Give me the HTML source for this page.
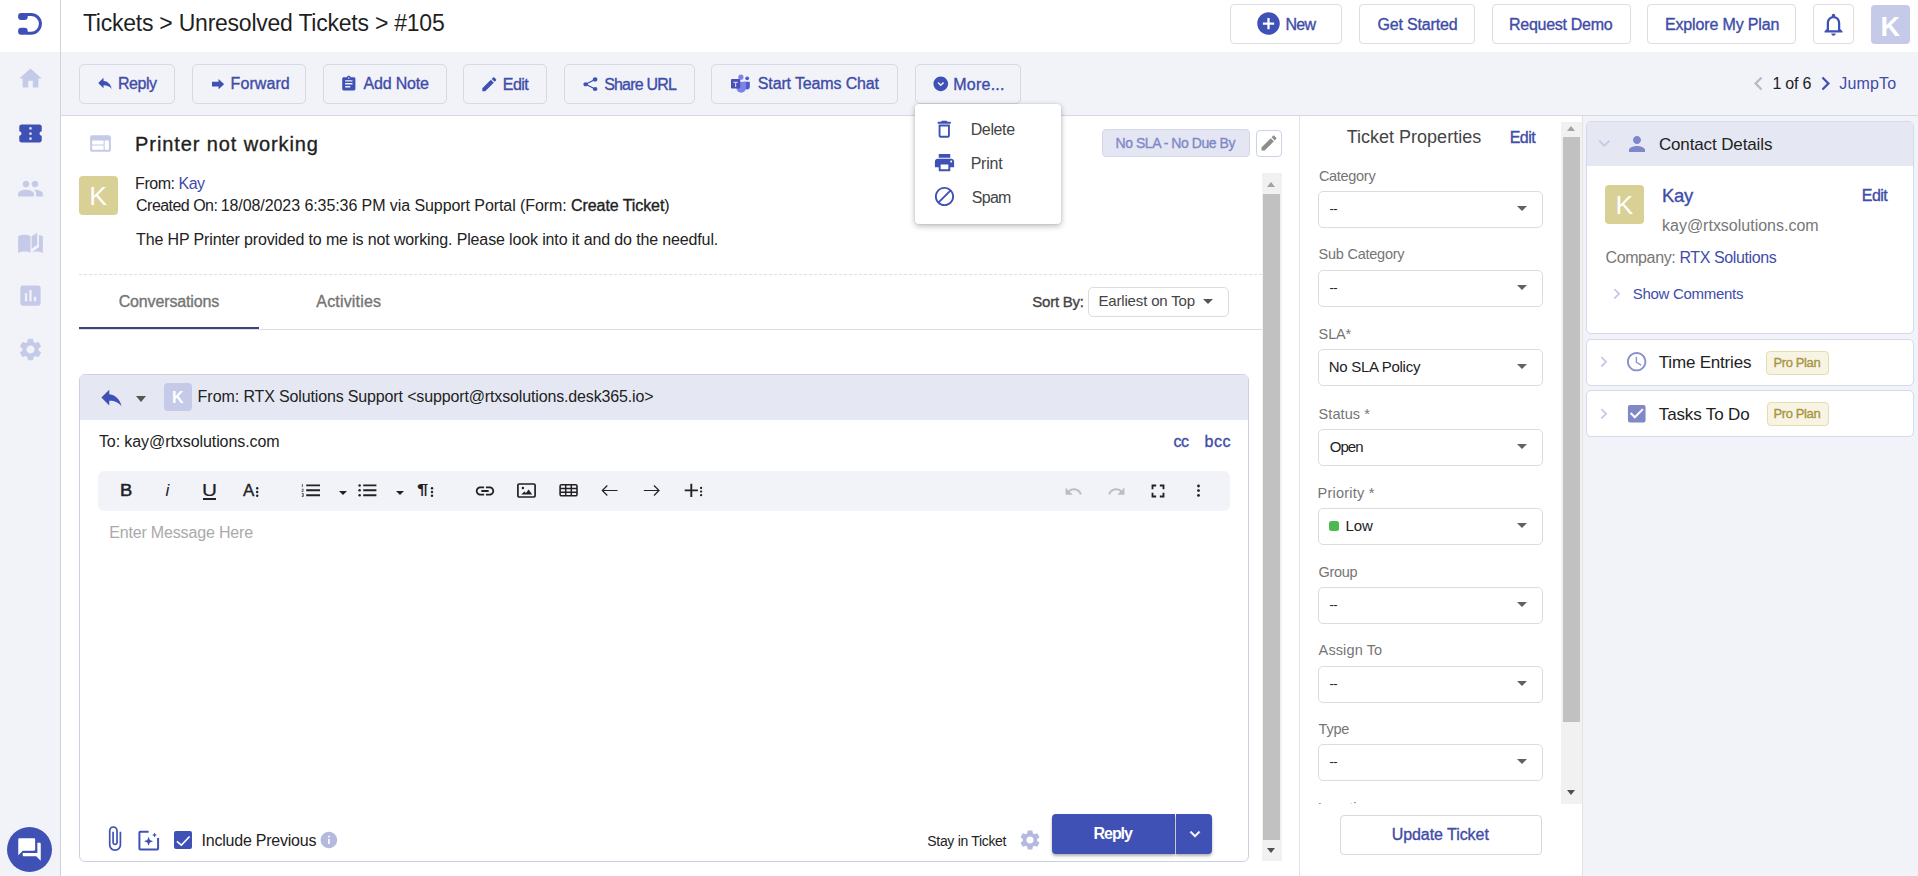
<!DOCTYPE html>
<html lang="en">
<head>
<meta charset="utf-8">
<title>Tickets - Unresolved Tickets - #105</title>
<style>
*{box-sizing:border-box;margin:0;padding:0}
html,body{width:1918px;height:876px;overflow:hidden;background:#fff}
body{font-family:"Liberation Sans",sans-serif;font-size:16px;color:#222;position:relative}
.abs{position:absolute}
.t{position:absolute;white-space:nowrap;line-height:1}
.ind{color:#3f4ca8}
.md{-webkit-text-stroke:0.35px currentColor}
svg{display:block}
/* sidebar */
#side{left:0;top:0;width:61px;height:876px;background:#f2f3f9;border-right:1px solid #d2d3da}
#sidetop{left:0;top:0;width:60px;height:52px;background:#fff}
/* header */
#hdr{left:61px;top:0;width:1857px;height:52px;background:#fff}
.hbtn{position:absolute;top:4.200px;height:40px;border:1px solid #dddde3;border-radius:4px;background:#fff}
/* toolbar */
#tbar{left:61px;top:52px;width:1857px;height:64px;background:#f2f3f9;border-bottom:1px solid #d5d7e3}
.tbtn{position:absolute;top:64px;height:40px;border:1px solid #d6d8e2;border-radius:5px;background:#f2f3f9}
/* props */
.lbl{position:absolute;left:1318px;font-size:15px;color:#757575;white-space:nowrap;line-height:1}
.sel{position:absolute;left:1318px;width:225px;height:37px;border:1px solid #dcdcdc;border-radius:5px;background:#fff}
.sel .v{position:absolute;left:11px;top:10px;font-size:15px;line-height:1;color:#222;white-space:nowrap}
.sel .c{position:absolute;right:15.200px;top:14px;width:0;height:0;border-left:5px solid transparent;border-right:5px solid transparent;border-top:5px solid #616161}
.card{position:absolute;left:1586.400px;width:328px;background:#fff;border:1px solid #d5d8e8;border-radius:5px}
.pro{position:absolute;height:24px;border:1px solid #e6dcae;border-radius:4px;background:#f8f4e3;color:#a89443;font-size:13px;line-height:22px;padding:0 6px;white-space:nowrap}
</style>
<style id="fit">
#title{left:82.90px;top:12px;letter-spacing:-0.238px}
#hnew{left:1285.60px;top:17px;letter-spacing:-0.830px}
#hget{left:1377.50px;top:17px;letter-spacing:-0.173px}
#hreq{left:1509.10px;top:17px;letter-spacing:-0.293px}
#hexp{left:1664.90px;top:17px;letter-spacing:-0.143px}
#hav{left:1880.60px;top:14px;letter-spacing:-0.901px}
#breply{left:118.00px;top:76px;letter-spacing:-0.477px}
#bfwd{left:230.60px;top:76px;letter-spacing:0.068px}
#bnote{left:363.40px;top:76px;letter-spacing:-0.160px}
#bedit{left:502.80px;top:77px;letter-spacing:-0.578px}
#bshare{left:604.20px;top:77px;letter-spacing:-0.820px}
#bteams{left:757.80px;top:76px;letter-spacing:-0.138px}
#bmore{left:953.30px;top:77px;letter-spacing:0.225px}
#pg{left:1772.40px;top:76px;letter-spacing:-0.227px}
#jump{left:1839.30px;top:76px;letter-spacing:0.173px}
#subj{left:135.10px;top:134px;letter-spacing:0.893px}
#sla{left:1115.50px;top:136px;letter-spacing:-0.454px}
#av1{left:89.20px;top:183px;letter-spacing:-0.612px}
#from1{left:135.10px;top:176px;letter-spacing:-0.475px}
#created{left:220.70px;top:198px;letter-spacing:-0.076px}
#body1{left:136.10px;top:232px;letter-spacing:-0.139px}
#tab1{left:118.70px;top:294px;letter-spacing:-0.140px}
#tab2{left:316.30px;top:294px;letter-spacing:0.175px}
#sortl{left:1032.30px;top:294px;letter-spacing:-0.242px}
#sortv{left:1098.40px;top:293px;letter-spacing:-0.158px}
#av2{left:172.10px;top:390px;letter-spacing:-0.908px}
#from2a{left:197.60px;top:389px;letter-spacing:-0.034px}
#from2{left:243.40px;top:389px;letter-spacing:-0.143px}
#to{left:98.90px;top:434px;letter-spacing:-0.078px}
#cc{left:1173.60px;top:434px;letter-spacing:-0.600px}
#bcc{left:1204.50px;top:434px;letter-spacing:0.547px}
#ph{left:109.20px;top:525px;letter-spacing:-0.167px}
#incl{left:201.60px;top:833px;letter-spacing:-0.233px}
#stay{left:927.30px;top:834px;letter-spacing:-0.314px}
#rbtn{left:1093.60px;top:826px;letter-spacing:-1.070px}
#ptitle{left:1346.70px;top:128px;letter-spacing:0.007px}
#pedit{left:1509.70px;top:130px;letter-spacing:-0.511px}
#upd{left:1391.70px;top:827px;letter-spacing:-0.057px}
#cdt{left:1658.90px;top:136px;letter-spacing:-0.127px}
#av3{left:1615.40px;top:192px;letter-spacing:-0.712px}
#cname{left:1662.00px;top:187px;letter-spacing:-0.370px}
#cedit{left:1861.80px;top:188px;letter-spacing:-0.544px}
#cmail{left:1662.00px;top:218px;letter-spacing:-0.006px}
#ccomp{left:1605.50px;top:250px;letter-spacing:-0.389px}
#cshow{left:1632.70px;top:286px;letter-spacing:-0.293px}
#tent{left:1658.80px;top:354px;letter-spacing:-0.198px}
#pro1{left:1773.40px;top:356px;letter-spacing:-0.364px}
#ttd{left:1658.80px;top:406px;letter-spacing:-0.143px}
#pro2{left:1773.40px;top:407px;letter-spacing:-0.364px}
#mdel{left:970.70px;top:122px;letter-spacing:-0.370px}
#mprint{left:970.70px;top:156px;letter-spacing:-0.240px}
#mspam{left:971.70px;top:190px;letter-spacing:-0.690px}
#eb{left:119.72px;top:482px;letter-spacing:0.180px}
#ei{left:165.40px;top:482px;letter-spacing:-0.304px}
#eu{left:202.08px;top:482px;letter-spacing:0.160px}
#ea{left:242.90px;top:482px;letter-spacing:-1.105px}
#l0{left:1318.90px;top:169px;letter-spacing:-0.299px}
#l1{left:1318.60px;top:247px;letter-spacing:-0.247px}
#l2{left:1318.60px;top:327px;letter-spacing:-0.140px}
#l3{left:1318.60px;top:407px;letter-spacing:0.080px}
#l4{left:1317.60px;top:486px;letter-spacing:0.227px}
#l5{left:1318.60px;top:565px;letter-spacing:-0.337px}
#l6{left:1318.60px;top:643px;letter-spacing:0.119px}
#l7{left:1318.60px;top:722px;letter-spacing:-0.224px}
#l8{left:1318.10px;top:801px;letter-spacing:-0.052px}
#v2{left:1328.70px;top:359px;letter-spacing:-0.279px}
#v3{left:1329.70px;top:439px;letter-spacing:-0.920px}
#v4{left:1345.50px;top:518px;letter-spacing:-0.099px}
#v0{left:1329.60px;top:202px;letter-spacing:-0.643px}
#v1{left:1329.60px;top:281px;letter-spacing:-0.643px}
#v5{left:1329.60px;top:598px;letter-spacing:-0.643px}
#v6{left:1329.60px;top:677px;letter-spacing:-0.643px}
#v7{left:1329.60px;top:755px;letter-spacing:-0.643px}
#created0{left:136.10px;top:198px;letter-spacing:-0.541px}
</style>
</head>
<body>
<!-- SIDEBAR -->
<div id="side" class="abs"></div>
<div id="sidetop" class="abs"></div>
<svg class="abs" style="left:0;top:0" width="60" height="52" viewBox="0 0 60 52"><path d="M26 14.4h5a9.4 9.4 0 0 1 0 18.800h-5" fill="none" stroke="#3f4fb5" stroke-width="3"/><rect x="18.100" y="12.900" width="9.600" height="7" rx="3.200" fill="#3f4fb5"/><rect x="18.100" y="27.800" width="9.600" height="6.900" rx="3.200" fill="#3f4fb5"/></svg>
<svg class="abs" style="left:17px;top:65px" width="27" height="27" viewBox="0 0 24 24" fill="#c5cae9"><path d="M10 20v-6h4v6h5v-8h3L12 3 2 12h3v8z"/></svg>
<svg class="abs" style="left:17px;top:120px" width="27" height="27" viewBox="0 0 24 24" fill="#3f51b5"><path d="M22 10V6c0-1.110-.9-2-2-2H4c-1.100 0-1.990.890-1.990 2v4c1.100 0 1.990.9 1.990 2s-.890 2-2 2v4c0 1.100.9 2 2 2h16c1.100 0 2-.9 2-2v-4c-1.100 0-2-.9-2-2s.9-2 2-2zm-9 7.500h-2v-2h2v2zm0-4.500h-2v-2h2v2zm0-4.500h-2v-2h2v2z"/></svg>
<svg class="abs" style="left:17px;top:175px" width="27" height="27" viewBox="0 0 24 24" fill="#c5cae9"><path d="M16 11c1.660 0 2.990-1.340 2.990-3S17.660 5 16 5c-1.660 0-3 1.340-3 3s1.340 3 3 3zm-8 0c1.660 0 2.990-1.340 2.990-3S9.660 5 8 5C6.340 5 5 6.340 5 8s1.340 3 3 3zm0 2c-2.330 0-7 1.170-7 3.500V19h14v-2.500c0-2.330-4.670-3.500-7-3.500zm8 0c-.29 0-.62.020-.97.050 1.160.84 1.970 1.970 1.970 3.450V19h6v-2.500c0-2.330-4.670-3.500-7-3.500z"/></svg>
<svg class="abs" style="left:17px;top:229px" width="27" height="27" viewBox="0 0 24 24" fill="#c5cae9"><path d="M1 6.500c2-.9 4.200-1.300 6-1.300 1.700 0 3.500.4 5 1.300v14.800c-1.500-.9-3.300-1.300-5-1.300-1.800 0-4 .4-6 1.300V6.500zM13 6.500l5-3.500v11l-5 3.500v-11zM19.500 5.300c1.200.2 2.400.6 3.500 1.200v14.800c-2-.9-4.200-1.300-6-1.300-1.300 0-2.700.2-4 .8l6.500-4.600V5.300z"/></svg>
<svg class="abs" style="left:17px;top:282px" width="27" height="27" viewBox="0 0 24 24" fill="#c5cae9"><path d="M19 3H5c-1.100 0-2 .9-2 2v14c0 1.100.9 2 2 2h14c1.100 0 2-.9 2-2V5c0-1.100-.9-2-2-2zM9 17H7v-7h2v7zm4 0h-2V7h2v10zm4 0h-2v-4h2v4z"/></svg>
<svg class="abs" style="left:17px;top:336px" width="27" height="27" viewBox="0 0 24 24" fill="#c5cae9"><path d="M19.140 12.940c.04-.3.060-.61.060-.94 0-.32-.020-.64-.070-.94l2.030-1.580c.18-.14.23-.41.12-.61l-1.920-3.320c-.12-.22-.37-.29-.59-.22l-2.390.96c-.5-.38-1.030-.7-1.620-.94l-.36-2.540c-.04-.24-.24-.41-.48-.41h-3.840c-.24 0-.43.17-.47.41l-.36 2.540c-.59.24-1.130.57-1.620.94l-2.390-.96c-.22-.08-.47 0-.59.22L2.740 8.870c-.12.21-.08.47.12.61l2.030 1.580c-.05.3-.09.63-.09.94s.02.64.07.94l-2.030 1.580c-.18.14-.23.41-.12.61l1.920 3.320c.12.22.37.29.59.22l2.390-.96c.5.38 1.030.7 1.620.94l.36 2.540c.05.24.24.41.48.41h3.840c.24 0 .44-.17.47-.41l.36-2.540c.59-.24 1.130-.56 1.620-.94l2.390.96c.22.08.47 0 .59-.22l1.920-3.320c.12-.22.07-.47-.12-.61l-2.010-1.580zM12 15.600c-1.980 0-3.600-1.620-3.600-3.600s1.620-3.600 3.600-3.600 3.600 1.620 3.600 3.600-1.620 3.600-3.600 3.600z"/></svg>
<div class="abs" style="left:7px;top:827px;width:45px;height:45px;border-radius:50%;background:#3f51b5"></div>
<svg class="abs" style="left:16px;top:836px" width="27" height="27" viewBox="0 0 24 24" fill="#fff"><path d="M21 6h-2v9H6v2c0 .55.45 1 1 1h11l4 4V7c0-.55-.45-1-1-1zm-4 6V3c0-.55-.45-1-1-1H3c-.55 0-1 .45-1 1v14l4-4h10c.55 0 1-.45 1-1z"/></svg>

<!-- HEADER -->
<div id="hdr" class="abs"></div>
<div class="t" id="title" style="font-size:23px;color:#1f1f1f">Tickets &gt; Unresolved Tickets &gt; #105</div>

<div class="hbtn" style="left:1230px;width:112px"></div>
<svg class="abs" style="left:1255px;top:10px" width="27" height="27" viewBox="0 0 24 24" fill="#3f51b5"><path d="M12 2C6.480 2 2 6.480 2 12s4.480 10 10 10 10-4.480 10-10S17.520 2 12 2zm5 11h-4v4h-2v-4H7v-2h4V7h2v4h4v2z"/></svg>
<div class="t ind md" id="hnew" style="font-size:16px">New</div>
<div class="hbtn" style="left:1359px;width:116px"></div>
<div class="t ind md" id="hget" style="font-size:16px">Get Started</div>
<div class="hbtn" style="left:1492px;width:139px"></div>
<div class="t ind md" id="hreq" style="font-size:16px">Request Demo</div>
<div class="hbtn" style="left:1647px;width:149px"></div>
<div class="t ind md" id="hexp" style="font-size:16px">Explore My Plan</div>
<div class="hbtn" style="left:1813px;width:41px"></div>
<svg class="abs" style="left:1820px;top:11px" width="27" height="27" viewBox="0 0 24 24" fill="#3f51b5"><path d="M12 22c1.100 0 2-.9 2-2h-4c0 1.100.9 2 2 2zm6-6v-5c0-3.070-1.630-5.640-4.500-6.320V4c0-.83-.67-1.500-1.500-1.500s-1.500.67-1.500 1.500v.68C7.640 5.360 6 7.920 6 11v5l-2 2v1h16v-1l-2-2zm-2 1H8v-6c0-2.480 1.510-4.500 4-4.500s4 2.020 4 4.500v6z"/></svg>
<div class="abs" style="left:1871px;top:5px;width:39px;height:39px;border-radius:4px;background:#c5cae9"></div>
<div class="t" id="hav" style="font-size:27px;font-weight:bold;color:#fff">K</div>

<!-- TOOLBAR -->
<div id="tbar" class="abs"></div>
<div class="tbtn" style="left:79px;width:96px"></div>
<svg class="abs" style="left:95.750px;top:74.200px" width="18" height="18" viewBox="0 0 24 24" fill="#3f51b5"><path d="M10 9V5l-7 7 7 7v-4.100c5 0 8.500 1.600 11 5.100-1-5-4-10-11-11z"/></svg>
<div class="t ind md" id="breply" style="font-size:16px">Reply</div>
<div class="tbtn" style="left:192px;width:114px"></div>
<svg class="abs" style="left:211.500px;top:78.500px" width="12.200" height="10.400" viewBox="0 0 12 10" preserveAspectRatio="none" fill="#3f51b5"><path d="M6.400 0L12 5 6.400 10V7.300H0V2.700h6.400z"/></svg>
<div class="t ind md" id="bfwd" style="font-size:16px">Forward</div>
<div class="tbtn" style="left:323px;width:124px"></div>
<svg class="abs" style="left:340px;top:74.600px" width="17.600" height="17.600" viewBox="0 0 24 24" fill="#3f51b5"><path d="M19 3h-4.180C14.400 1.840 13.300 1 12 1c-1.300 0-2.400.84-2.820 2H5c-1.100 0-2 .9-2 2v14c0 1.100.9 2 2 2h14c1.100 0 2-.9 2-2V5c0-1.100-.9-2-2-2zm-7 0c.55 0 1 .45 1 1s-.45 1-1 1-1-.45-1-1 .45-1 1-1zm2 14H7v-2h7v2zm3-4H7v-2h10v2zm0-4H7V7h10v2z"/></svg>
<div class="t ind md" id="bnote" style="font-size:16px">Add Note</div>
<div class="tbtn" style="left:463px;width:84px"></div>
<svg class="abs" style="left:479.900px;top:74.700px" width="18.600" height="18.600" viewBox="0 0 24 24" fill="#3f51b5"><path d="M3 17.250V21h3.750L17.810 9.940l-3.750-3.750L3 17.250zM20.710 7.040c.39-.39.39-1.020 0-1.410l-2.340-2.340c-.39-.39-1.020-.39-1.410 0l-1.830 1.830 3.750 3.750 1.830-1.830z"/></svg>
<div class="t ind md" id="bedit" style="font-size:16px">Edit</div>
<div class="tbtn" style="left:564px;width:130.700px"></div>
<svg class="abs" style="left:580.850px;top:75.600px" width="18.800" height="16.400" viewBox="0 0 24 24" preserveAspectRatio="none" fill="#3f51b5"><path d="M18 16.080c-.76 0-1.440.3-1.960.77L8.910 12.700c.05-.23.09-.46.09-.7s-.04-.47-.09-.7l7.050-4.110c.54.5 1.250.81 2.040.81 1.660 0 3-1.340 3-3s-1.340-3-3-3-3 1.340-3 3c0 .24.04.47.09.7L8.040 9.810C7.500 9.310 6.790 9 6 9c-1.660 0-3 1.340-3 3s1.340 3 3 3c.79 0 1.500-.31 2.040-.81l7.120 4.160c-.05.21-.08.43-.08.65 0 1.610 1.310 2.920 2.920 2.920 1.610 0 2.920-1.310 2.920-2.920s-1.310-2.920-2.920-2.920z"/></svg>
<div class="t ind md" id="bshare" style="font-size:16px">Share URL</div>
<div class="tbtn" style="left:711px;width:187px"></div>
<svg class="abs" id="teams" style="left:730px;top:74px" width="21" height="20" viewBox="0 0 21 20"><circle cx="17.200" cy="4.300" r="1.900" fill="#5059c9"/><path d="M14 7.700h5.800v4.800a2.800 2.800 0 0 1-5.800 0z" fill="#5059c9"/><circle cx="10.900" cy="3.200" r="2.600" fill="#7b83eb"/><path d="M6.400 7.700H16v6.200a4.800 4.800 0 0 1-9.600 0z" fill="#7b83eb"/><rect x="1" y="5.100" width="9.200" height="9.400" rx=".8" fill="#4a4fb8"/><path d="M3.400 7.800h4.400v1.100H6.200v4H5V8.900H3.400z" fill="#c5c9f6"/></svg>
<div class="t ind md" id="bteams" style="font-size:16px">Start Teams Chat</div>
<div class="tbtn" style="left:915px;width:105.500px"></div>
<svg class="abs" style="left:931.500px;top:75.300px" width="17.600" height="17.600" viewBox="0 0 24 24" fill="#3f51b5"><path d="M12 2C6.480 2 2 6.480 2 12s4.480 10 10 10 10-4.480 10-10S17.520 2 12 2zm0 13.500L7.500 11l1.420-1.410L12 12.670l3.080-3.080L16.500 11 12 15.500z"/></svg>
<div class="t ind md" id="bmore" style="font-size:16px">More...</div>

<svg class="abs" style="left:1745.200px;top:70.050px" width="27" height="27" viewBox="0 0 24 24" fill="#b8b9c4"><path d="M15.410 7.410L14 6l-6 6 6 6 1.410-1.410L10.830 12z"/></svg>
<div class="t" id="pg" style="font-size:16px;color:#222">1 of 6</div>
<svg class="abs" style="left:1811.800px;top:70.050px" width="27" height="27" viewBox="0 0 24 24" fill="#3f51b5"><path d="M10 6L8.590 7.410 13.170 12l-4.580 4.590L10 18l6-6z"/></svg>
<div class="t ind" id="jump" style="font-size:16px">JumpTo</div>

<!-- MAIN -->
<div class="abs" id="main" style="left:61px;top:116px;width:1238px;height:760px;background:#fff"></div>
<svg class="abs" style="left:88px;top:131px" width="25" height="25" viewBox="0 0 24 24" fill="#c5cae9"><path d="M20 4H4c-1.100 0-1.990.9-1.990 2L2 18c0 1.100.9 2 2 2h16c1.100 0 2-.9 2-2V6c0-1.100-.9-2-2-2zm-5 14H4v-4h11v4zm0-5H4V9h11v4zm5 5h-4V9h4v9z"/></svg>
<div class="t md" id="subj" style="font-size:20px;color:#1f1f1f">Printer not working</div>
<div class="abs" style="left:1102px;top:129px;width:148px;height:28px;border:1px solid #d3d7ea;border-radius:4px;background:#e4e7f3"></div>
<div class="t md" id="sla" style="font-size:14px;color:#7f89c6">No SLA - No Due By</div>
<div class="abs" style="left:1256.300px;top:130.200px;width:25.600px;height:26.600px;border:1px solid #cfd2e4;border-radius:4px;background:#fff"></div>
<svg class="abs" style="left:1258.800px;top:133.200px" width="20" height="20" viewBox="0 0 24 24" fill="#8d8d8d"><path d="M3 17.250V21h3.750L17.810 9.940l-3.750-3.750L3 17.250zM20.710 7.040c.39-.39.39-1.020 0-1.410l-2.340-2.340c-.39-.39-1.020-.39-1.410 0l-1.830 1.830 3.750 3.750 1.830-1.830z"/></svg>

<div class="abs" style="left:79px;top:176px;width:39px;height:39px;border-radius:4px;background:#d9d095"></div>
<div class="t" id="av1" style="font-size:26.500px;color:#fff">K</div>
<div class="t" id="from1" style="font-size:16px;color:#222">From: <span class="ind">Kay</span></div>
<div class="t" id="created0" style="font-size:16px;color:#222">Created On:</div>
<div class="t" id="created" style="font-size:16px;color:#222">18/08/2023 6:35:36 PM via Support Portal (Form: <span class="md">Create Ticket</span>)</div>
<div class="t" id="body1" style="font-size:16px;color:#222">The HP Printer provided to me is not working. Please look into it and do the needful.</div>
<div class="abs" style="left:79px;top:274px;width:1183px;height:0;border-top:1px dashed #e0e0e0"></div>

<div class="t md" id="tab1" style="font-size:16px;color:#757575">Conversations</div>
<div class="t md" id="tab2" style="font-size:16px;color:#757575">Activities</div>
<div class="abs" style="left:79px;top:329px;width:1183px;height:1px;background:#dedede"></div>
<div class="abs" style="left:79px;top:326.500px;width:180px;height:2.700px;background:#3c447f"></div>
<div class="t md" id="sortl" style="font-size:15px;color:#444">Sort By:</div>
<div class="abs" style="left:1088px;top:287px;width:141px;height:30px;border:1px solid #dcdcdc;border-radius:5px;background:#fff"></div>
<div class="t" id="sortv" style="font-size:15px;color:#444">Earliest on Top</div>
<div class="abs" style="left:1203px;top:299px;width:0;height:0;border-left:5px solid transparent;border-right:5px solid transparent;border-top:5px solid #555"></div>

<!-- main scrollbar -->
<div class="abs" style="left:1261.500px;top:173px;width:20.500px;height:688.400px;background:#f1f1f1"></div>
<div class="abs" style="left:1263.200px;top:194.200px;width:16.800px;height:645.500px;background:#c1c1c1"></div>
<div class="abs" style="left:1266.800px;top:182px;width:0;height:0;border-left:4.600px solid transparent;border-right:4.600px solid transparent;border-bottom:5px solid #a3a3a3"></div>
<div class="abs" style="left:1266.800px;top:848px;width:0;height:0;border-left:4.600px solid transparent;border-right:4.600px solid transparent;border-top:5px solid #505050"></div>

<!-- reply box -->
<div class="abs" style="left:79px;top:374px;width:1170px;height:488px;border:1px solid #cdd0e0;border-radius:6px;background:#fff;overflow:hidden"><div style="height:45px;background:#e5e8f3"></div></div>
<svg class="abs" style="left:98px;top:384px" width="27" height="27" viewBox="0 0 24 24" fill="#3f51b5"><path d="M10 9V5l-7 7 7 7v-4.100c5 0 8.500 1.600 11 5.100-1-5-4-10-11-11z"/></svg>
<div class="abs" style="left:136.100px;top:395.800px;width:0;height:0;border-left:5.800px solid transparent;border-right:5.800px solid transparent;border-top:6px solid #555"></div>
<div class="abs" style="left:164.300px;top:382.700px;width:27.700px;height:28.800px;border-radius:4px;background:#c5cae9"></div>
<div class="t" id="av2" style="font-size:16px;font-weight:bold;color:#fff">K</div>
<div class="t" id="from2a" style="font-size:16px;color:#222">From:</div>
<div class="t" id="from2" style="font-size:16px;color:#222">RTX Solutions Support &lt;support@rtxsolutions.desk365.io&gt;</div>
<div class="t" id="to" style="font-size:16px;color:#222">To: kay@rtxsolutions.com</div>
<div class="t ind md" id="cc" style="font-size:16px">cc</div>
<div class="t ind md" id="bcc" style="font-size:16px">bcc</div>
<div class="abs" id="edbar" style="left:98px;top:471px;width:1132px;height:40px;border-radius:6px;background:#f2f3f9"></div>
<!-- editor icons -->
<div class="t" id="eb" style="font-size:17px;color:#222;-webkit-text-stroke:.5px #222;transform:scaleX(1.08);transform-origin:0 0">B</div>
<div class="t" id="ei" style="font-size:17px;font-style:italic;color:#222">i</div>
<div class="t" id="eu" style="font-size:17px;color:#222;transform:scaleX(1.22);transform-origin:0 0;-webkit-text-stroke:.2px #222">U</div>
<div class="abs" style="left:203px;top:498px;width:13px;height:1.500px;background:#222"></div>
<div class="t md" id="ea" style="font-size:17px;color:#222">A</div>
<svg class="abs" style="left:255px;top:484px" width="5" height="14" viewBox="0 0 5 14" fill="#222"><circle cx="2.200" cy="4.200" r="1.200"/><circle cx="2.200" cy="8" r="1.200"/><circle cx="2.200" cy="11.800" r="1.200"/></svg>
<svg class="abs" style="left:301px;top:483px" width="20" height="15" viewBox="0 0 20 15"><path d="M5.200 2.400H19M5.200 7.300H19M5.200 12.200H19" stroke="#222" stroke-width="1.900" fill="none"/><path d="M1.400 1v3M.8 6.200h1.400v1L.8 8.600h1.600M.8 10.600h1.500v1.500H1.200M2.300 12.100v1.400H.8" stroke="#222" stroke-width=".7" fill="none"/></svg>
<div class="abs" style="left:339px;top:490.500px;width:0;height:0;border-left:4px solid transparent;border-right:4px solid transparent;border-top:4px solid #222"></div>
<svg class="abs" style="left:358px;top:483px" width="20" height="15" viewBox="0 0 20 15"><path d="M5.200 2.400H18.400M5.200 7.300H18.400M5.200 12.200H18.400" stroke="#222" stroke-width="1.900" fill="none"/><circle cx="1.600" cy="2.400" r="1.250" fill="#222"/><circle cx="1.600" cy="7.300" r="1.250" fill="#222"/><circle cx="1.600" cy="12.200" r="1.250" fill="#222"/></svg>
<div class="abs" style="left:396px;top:490.500px;width:0;height:0;border-left:4px solid transparent;border-right:4px solid transparent;border-top:4px solid #222"></div>
<div class="t" id="ep" style="left:417px;top:482px;font-size:14.500px;font-weight:bold;color:#222;transform:scaleX(1.400);transform-origin:0 0">&para;</div>
<svg class="abs" style="left:430px;top:484px" width="5" height="14" viewBox="0 0 5 14" fill="#222"><circle cx="2" cy="4.200" r="1.200"/><circle cx="2" cy="8" r="1.200"/><circle cx="2" cy="11.800" r="1.200"/></svg>
<svg class="abs" style="left:473.500px;top:479.500px" width="22" height="22" viewBox="0 0 24 24" fill="#222"><path d="M3.900 12c0-1.710 1.390-3.100 3.100-3.100h4V7H7c-2.760 0-5 2.240-5 5s2.240 5 5 5h4v-1.900H7c-1.710 0-3.100-1.390-3.100-3.100zM8 13h8v-2H8v2zm9-6h-4v1.900h4c1.710 0 3.100 1.390 3.100 3.100s-1.390 3.100-3.100 3.100h-4V17h4c2.760 0 5-2.240 5-5s-2.240-5-5-5z"/></svg>
<svg class="abs" style="left:516px;top:482px" width="21" height="17" viewBox="0 0 21 17"><rect x="1.900" y="2" width="17.200" height="13" rx="1.200" fill="none" stroke="#222" stroke-width="1.700"/><path d="M5.300 12.400l3.100-2.900 1.600 1.400 2.600-3.400 3.600 4.900z" fill="#222"/><circle cx="6.900" cy="6" r="1.200" fill="#222"/></svg>
<svg class="abs" style="left:558px;top:483px" width="21" height="15" viewBox="0 0 21 15"><rect x="2.100" y="1.800" width="16.900" height="11" rx="1.400" fill="none" stroke="#222" stroke-width="1.600"/><path d="M2 5.500h17M2 9.200h17M7.700 2v11M13.300 2v11" stroke="#222" stroke-width="1.500" fill="none"/></svg>
<svg class="abs" style="left:600px;top:483px" width="19" height="15" viewBox="0 0 19 15"><path d="M17.500 7.500H2.600M7.300 2.500L2.300 7.500l5 5" stroke="#222" stroke-width="1.200" fill="none"/></svg>
<svg class="abs" style="left:642px;top:483px" width="19" height="15" viewBox="0 0 19 15"><path d="M1.800 7.500h14.900M12 2.500l5 5-5 5" stroke="#222" stroke-width="1.200" fill="none"/></svg>
<svg class="abs" style="left:684px;top:483px" width="20" height="15" viewBox="0 0 20 15"><path d="M.7 7.400h13.200M7.300 .8v13.200" stroke="#222" stroke-width="1.900" fill="none"/><circle cx="17.100" cy="5" r="1.150" fill="#222"/><circle cx="17.100" cy="8.600" r="1.150" fill="#222"/><circle cx="17.100" cy="12.200" r="1.150" fill="#222"/></svg>
<svg class="abs" style="left:1064px;top:481.600px" width="19" height="19" viewBox="0 0 24 24" fill="#bdbdbd"><path d="M12.500 8c-2.650 0-5.050.99-6.900 2.600L2 7v9h9l-3.620-3.620c1.390-1.160 3.160-1.880 5.120-1.880 3.540 0 6.550 2.310 7.600 5.500l2.370-.78C21.080 11.030 17.150 8 12.500 8z"/></svg>
<svg class="abs" style="left:1106.500px;top:481.600px" width="19" height="19" viewBox="0 0 24 24" fill="#bdbdbd"><path d="M18.400 10.600C16.550 8.990 14.150 8 11.500 8c-4.650 0-8.580 3.030-9.960 7.220L3.900 16c1.050-3.190 4.050-5.500 7.600-5.500 1.950 0 3.730.72 5.120 1.880L13 16h9V7l-3.600 3.600z"/></svg>
<svg class="abs" style="left:1146.500px;top:479.500px" width="22" height="22" viewBox="0 0 24 24" fill="#222"><path d="M7 14H5v5h5v-2H7v-3zm-2-4h2V7h3V5H5v5zm12 7h-3v2h5v-5h-2v3zM14 5v2h3v3h2V5h-5z"/></svg>
<svg class="abs" style="left:1196px;top:483px" width="5" height="15" viewBox="0 0 5 15" fill="#222"><circle cx="2.500" cy="3" r="1.400"/><circle cx="2.500" cy="7.600" r="1.400"/><circle cx="2.500" cy="12.400" r="1.400"/></svg>
<div class="t" id="ph" style="font-size:16px;color:#aaa">Enter Message Here</div>

<!-- bottom row -->
<svg class="abs" style="left:101.300px;top:824.800px" width="27" height="27" viewBox="0 0 24 24" fill="#3f51b5"><path d="M16.500 6v11.500c0 2.210-1.790 4-4 4s-4-1.790-4-4V5c0-1.380 1.120-2.500 2.500-2.500s2.500 1.120 2.500 2.500v10.500c0 .55-.45 1-1 1s-1-.45-1-1V6H10v9.500c0 1.380 1.120 2.500 2.500 2.500s2.500-1.120 2.500-2.500V5c0-2.210-1.790-4-4-4S7 2.790 7 5v12.500c0 3.040 2.460 5.500 5.500 5.500s5.500-2.460 5.500-5.500V6h-1.500z"/></svg>
<svg class="abs" id="spark" style="left:138px;top:829px" width="22" height="23" viewBox="0 0 22 23"><path d="M10.600 2.700H2.400a1 1 0 0 0-1 1v15.900a1 1 0 0 0 1 1h16.700a1 1 0 0 0 1-1V9.100" fill="none" stroke="#3f51b5" stroke-width="2"/><path d="M10.600 7.700l1.300 3.200 3.200 1.300-3.200 1.300-1.300 3.200-1.300-3.200-3.200-1.300 3.200-1.300z" fill="#3f51b5"/><path d="M16.550 3.500l.75 1.700 1.700.75-1.700.75-.75 1.700-.75-1.700-1.700-.75 1.700-.75z" fill="#3f51b5"/></svg>
<div class="abs" style="left:174px;top:831px;width:18px;height:18px;border-radius:2px;background:#3f51b5"></div>
<svg class="abs" style="left:174px;top:831px" width="18" height="18" viewBox="0 0 18 18"><path d="M2.900 10.400l4.500 3.700L15.600 5.500" fill="none" stroke="#fff" stroke-width="1.600"/></svg>
<div class="t" id="incl" style="font-size:16px;color:#222">Include Previous</div>
<svg class="abs" style="left:319.300px;top:830.100px" width="19.800" height="19.800" viewBox="0 0 24 24" fill="#b4b9dd"><path d="M12 2C6.480 2 2 6.480 2 12s4.480 10 10 10 10-4.480 10-10S17.520 2 12 2zm1 15h-2v-6h2v6zm0-8h-2V7h2v2z"/></svg>
<div class="t" id="stay" style="font-size:14px;color:#222">Stay in Ticket</div>
<svg class="abs" style="left:1017.500px;top:828.400px" width="24" height="24" viewBox="0 0 24 24" fill="#b4b9dd"><path d="M19.140 12.940c.04-.3.060-.61.060-.94 0-.32-.020-.64-.070-.94l2.030-1.580c.18-.14.23-.41.12-.61l-1.920-3.320c-.12-.22-.37-.29-.59-.22l-2.390.96c-.5-.38-1.030-.7-1.620-.94l-.36-2.540c-.04-.24-.24-.41-.48-.41h-3.840c-.24 0-.43.17-.47.41l-.36 2.540c-.59.24-1.130.57-1.620.94l-2.390-.96c-.22-.08-.47 0-.59.22L2.740 8.870c-.12.21-.08.47.12.61l2.030 1.580c-.05.3-.09.63-.09.94s.02.64.07.94l-2.030 1.580c-.18.14-.23.41-.12.61l1.920 3.320c.12.22.37.29.59.22l2.390-.96c.5.38 1.030.7 1.620.94l.36 2.540c.05.24.24.41.48.41h3.840c.24 0 .44-.17.47-.41l.36-2.540c.59-.24 1.130-.56 1.620-.94l2.390.96c.22.08.47 0 .59-.22l1.920-3.320c.12-.22.07-.47-.12-.61l-2.010-1.580zM12 15.600c-1.980 0-3.600-1.620-3.600-3.600s1.620-3.600 3.600-3.600 3.600 1.620 3.600 3.600-1.620 3.600-3.600 3.600z"/></svg>
<div class="abs" style="left:1052px;top:814px;width:123px;height:40px;border-radius:4px 0 0 4px;background:#3f51b5;box-shadow:0 2px 3px rgba(0,0,0,.3)"></div>
<div class="abs" style="left:1176px;top:814px;width:36px;height:40px;border-radius:0 4px 4px 0;background:#3f51b5;box-shadow:0 2px 3px rgba(0,0,0,.3)"></div>
<div class="t" id="rbtn" style="font-size:16px;font-weight:bold;color:#fff">Reply</div>
<svg class="abs" style="left:1184.500px;top:824.300px" width="20" height="20" viewBox="0 0 24 24" fill="#fff" stroke="#fff" stroke-width=".6"><path d="M16.590 8.590L12 13.170 7.410 8.590 6 10l6 6 6-6z"/></svg>

<!-- PROPS -->
<div class="abs" id="props" style="left:1299px;top:116px;width:284px;height:760px;background:#fff;border-left:1px solid #e2e2e8;border-right:1px solid #e2e2e8"></div>
<div class="t" id="ptitle" style="font-size:18px;color:#444">Ticket Properties</div>
<div class="t ind md" id="pedit" style="font-size:16px">Edit</div>
<div class="t" id="l0" style="font-size:14.500px;color:#757575">Category</div>
<div class="sel" style="top:191px"><div class="c"></div></div>
<div class="t" id="v0" style="font-size:13px;color:#222">--</div>
<div class="t" id="l1" style="font-size:14.500px;color:#757575">Sub Category</div>
<div class="sel" style="top:270px"><div class="c"></div></div>
<div class="t" id="v1" style="font-size:13px;color:#222">--</div>
<div class="t" id="l2" style="font-size:14.500px;color:#757575">SLA*</div>
<div class="sel" style="top:349px"><div class="c"></div></div>
<div class="t" id="v2" style="font-size:15px;color:#222">No SLA Policy</div>
<div class="t" id="l3" style="font-size:14.500px;color:#757575">Status *</div>
<div class="sel" style="top:429px"><div class="c"></div></div>
<div class="t" id="v3" style="font-size:15px;color:#222">Open</div>
<div class="t" id="l4" style="font-size:14.500px;color:#757575">Priority *</div>
<div class="sel" style="top:508px"><div class="c"></div></div>
<div class="abs" style="left:1329px;top:521px;width:10px;height:10px;border-radius:2.500px;background:#4cba4f"></div>
<div class="t" id="v4" style="font-size:15px;color:#222">Low</div>
<div class="t" id="l5" style="font-size:14.500px;color:#757575">Group</div>
<div class="sel" style="top:587px"><div class="c"></div></div>
<div class="t" id="v5" style="font-size:13px;color:#222">--</div>
<div class="t" id="l6" style="font-size:14.500px;color:#757575">Assign To</div>
<div class="sel" style="top:666px"><div class="c"></div></div>
<div class="t" id="v6" style="font-size:13px;color:#222">--</div>
<div class="t" id="l7" style="font-size:14.500px;color:#757575">Type</div>
<div class="sel" style="top:744px"><div class="c"></div></div>
<div class="t" id="v7" style="font-size:13px;color:#222">--</div>
<div class="t" id="l8" style="font-size:14.500px;color:#757575">Location</div>
<!-- props scrollbar -->
<div class="abs" style="left:1300px;top:804px;width:282px;height:72px;background:#fff"></div>
<div class="abs" style="left:1561.100px;top:121.500px;width:21px;height:682.300px;background:#f1f1f1"></div>
<div class="abs" style="left:1563.100px;top:137.400px;width:16.800px;height:584.400px;background:#c1c1c1"></div>
<div class="abs" style="left:1567px;top:125.500px;width:0;height:0;border-left:4.600px solid transparent;border-right:4.600px solid transparent;border-bottom:5px solid #a3a3a3"></div>
<div class="abs" style="left:1567px;top:790px;width:0;height:0;border-left:4.600px solid transparent;border-right:4.600px solid transparent;border-top:5px solid #505050"></div>
<div class="abs" style="left:1340px;top:815px;width:202px;height:39.500px;border:1px solid #d8d8de;border-radius:4px;background:#fff"></div>
<div class="t ind md" id="upd" style="font-size:16px">Update Ticket</div>

<!-- RIGHT -->
<div class="abs" id="right" style="left:1583px;top:116px;width:335px;height:760px;background:#f2f3f9"></div>
<div class="card" style="top:121px;height:213px;overflow:hidden"><div style="height:44px;background:#e5e8f3"></div></div>
<svg class="abs" style="left:1593.050px;top:131.900px" width="22.600" height="22.600" viewBox="0 0 24 24" fill="#c5cae9"><path d="M16.590 8.590L12 13.170 7.410 8.590 6 10l6 6 6-6z"/></svg>
<svg class="abs" style="left:1625px;top:132px" width="24" height="24" viewBox="0 0 24 24" fill="#7d88cc"><path d="M12 12c2.210 0 4-1.790 4-4s-1.790-4-4-4-4 1.790-4 4 1.790 4 4 4zm0 2c-2.670 0-8 1.340-8 4v2h16v-2c0-2.660-5.330-4-8-4z"/></svg>
<div class="t" id="cdt" style="font-size:17px;color:#222">Contact Details</div>
<div class="abs" style="left:1605px;top:185px;width:39px;height:39px;border-radius:4px;background:#d9d095"></div>
<div class="t" id="av3" style="font-size:26.500px;color:#fff">K</div>
<div class="t ind md" id="cname" style="font-size:18.500px">Kay</div>
<div class="t ind md" id="cedit" style="font-size:16px">Edit</div>
<div class="t" id="cmail" style="font-size:16px;color:#777">kay@rtxsolutions.com</div>
<div class="t" id="ccomp" style="font-size:16px;color:#777">Company: <span class="ind">RTX Solutions</span></div>
<svg class="abs" style="left:1606.200px;top:283.100px" width="21.500" height="21.500" viewBox="0 0 24 24" fill="#c5cae9"><path d="M10 6L8.590 7.410 13.170 12l-4.580 4.590L10 18l6-6z"/></svg>
<div class="t ind" id="cshow" style="font-size:15px">Show Comments</div>

<div class="card" style="top:339px;height:47px"></div>
<svg class="abs" style="left:1593.400px;top:351.100px" width="21.500" height="21.500" viewBox="0 0 24 24" fill="#c5cae9"><path d="M10 6L8.590 7.410 13.170 12l-4.580 4.590L10 18l6-6z"/></svg>
<svg class="abs" style="left:1625.200px;top:349.900px" width="23.300" height="23.300" viewBox="0 0 24 24" fill="#8a93cc"><path d="M11.990 2C6.470 2 2 6.480 2 12s4.470 10 9.990 10C17.520 22 22 17.520 22 12S17.520 2 11.990 2zM12 20c-4.420 0-8-3.580-8-8s3.580-8 8-8 8 3.580 8 8-3.580 8-8 8zm.5-13H11v6l5.250 3.150.75-1.230-4.500-2.670z"/></svg>
<div class="t" id="tent" style="font-size:17px;color:#222">Time Entries</div>
<div class="pro" style="left:1766px;top:351px;width:63px"></div>
<div class="t md" id="pro1" style="font-size:13px;color:#a89443">Pro Plan</div>

<div class="card" style="top:390px;height:47px"></div>
<svg class="abs" style="left:1593.400px;top:402.800px" width="21.500" height="21.500" viewBox="0 0 24 24" fill="#c5cae9"><path d="M10 6L8.590 7.410 13.170 12l-4.580 4.590L10 18l6-6z"/></svg>
<svg class="abs" style="left:1625.200px;top:401.700px" width="23.500" height="23.500" viewBox="0 0 24 24" fill="#8088c8"><path d="M19 3H5c-1.110 0-2 .9-2 2v14c0 1.100.89 2 2 2h14c1.110 0 2-.9 2-2V5c0-1.100-.89-2-2-2zm-9 14l-5-5 1.410-1.410L10 14.170l7.590-7.590L19 8l-9 9z"/></svg>
<div class="t" id="ttd" style="font-size:17px;color:#222">Tasks To Do</div>
<div class="pro" style="left:1767px;top:402px;width:62px"></div>
<div class="t md" id="pro2" style="font-size:13px;color:#a89443">Pro Plan</div>

<!-- DROPDOWN -->
<div class="abs" style="left:915px;top:104px;width:146px;height:120px;border-radius:4px;background:#fff;box-shadow:0 2px 6px rgba(0,0,0,.28),0 0 2px rgba(0,0,0,.12)"></div>
<svg class="abs" style="left:932.900px;top:118.400px" width="22.500" height="22.500" viewBox="0 0 24 24" fill="#3f51b5"><path d="M6 19c0 1.100.9 2 2 2h8c1.100 0 2-.9 2-2V7H6v12zM8 9h8v10H8V9zm7.500-5l-1-1h-5l-1 1H5v2h14V4z"/></svg>
<div class="t" id="mdel" style="font-size:16px;color:#444">Delete</div>
<svg class="abs" style="left:932.600px;top:151px" width="23" height="23" viewBox="0 0 24 24" fill="#3f51b5"><path d="M19 8H5c-1.660 0-3 1.340-3 3v6h4v4h12v-4h4v-6c0-1.660-1.340-3-3-3zm-3 11H8v-5h8v5zm3-7c-.55 0-1-.45-1-1s.45-1 1-1 1 .45 1 1-.45 1-1 1zm-1-9H6v4h12V3z"/></svg>
<div class="t" id="mprint" style="font-size:16px;color:#444">Print</div>
<svg class="abs" style="left:932.600px;top:184.900px" width="23" height="23" viewBox="0 0 24 24" fill="#3f51b5"><path d="M12 2C6.480 2 2 6.480 2 12s4.480 10 10 10 10-4.480 10-10S17.520 2 12 2zM4 12c0-4.420 3.580-8 8-8 1.850 0 3.550.63 4.900 1.690L5.690 16.900C4.630 15.550 4 13.850 4 12zm8 8c-1.850 0-3.550-.63-4.900-1.690L18.310 7.100C19.370 8.450 20 10.150 20 12c0 4.420-3.580 8-8 8z"/></svg>
<div class="t" id="mspam" style="font-size:16px;color:#444">Spam</div>

</body>
</html>
